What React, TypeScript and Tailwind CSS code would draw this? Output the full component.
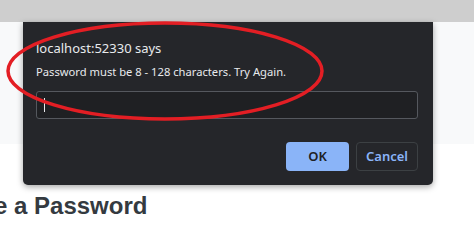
export default function App() {
  return (
    <div className="relative h-[236px] w-[474px] overflow-hidden bg-white" style={{ fontFamily: "'Noto Sans', 'Open Sans', sans-serif" }}>
      <div className="h-[22px] bg-[#cecece]" />
      <div className="h-[122px] bg-[#f8f9fa]" />
      <h1 className="-ml-[6px] mt-[47px] whitespace-nowrap text-[24px] font-bold leading-[30px] text-[#343a40]" style={{ fontFamily: "'Liberation Sans', Arial, sans-serif" }}>
        e a Password
      </h1>

      <div className="absolute left-[23px] top-[22px] flex h-[163px] w-[410px] flex-col rounded-b-[5px] bg-[#25262a] px-[13px] shadow-[0_2px_6px_rgba(0,0,0,0.35)]">
        <p className="mt-[16px] text-[13px] leading-[20px] text-[#e8eaed]">localhost:52330 says</p>
        <p className="mt-[6px] text-[11.2px] leading-[16px] text-[#e8eaed]">Password must be 8 - 128 characters. Try Again.</p>
        <div className="mt-[11px] flex h-[28px] w-[382px] items-center rounded-[3px] border border-[#55585e] bg-[#1f2023] pl-[7px]">
          <span className="h-[14px] w-px bg-[#e8eaed]" />
        </div>
        <div className="mt-[23px] flex justify-end gap-[7px] pr-[2px]">
          <button className="h-[29px] w-[63px] rounded-[4px] bg-[#8ab4f8] text-[13px] font-semibold text-[#202124]">OK</button>
          <button className="h-[29px] w-[62px] rounded-[4px] border border-[#3c4043] text-[13px] font-semibold text-[#8ab4f8]">Cancel</button>
        </div>
      </div>

      <svg className="pointer-events-none absolute left-0 top-0" width="474" height="236" viewBox="0 0 474 236">
        <ellipse cx="165" cy="71" rx="157" ry="48" fill="none" stroke="#e31e24" strokeWidth="3.5" />
      </svg>
    </div>
  );
}
